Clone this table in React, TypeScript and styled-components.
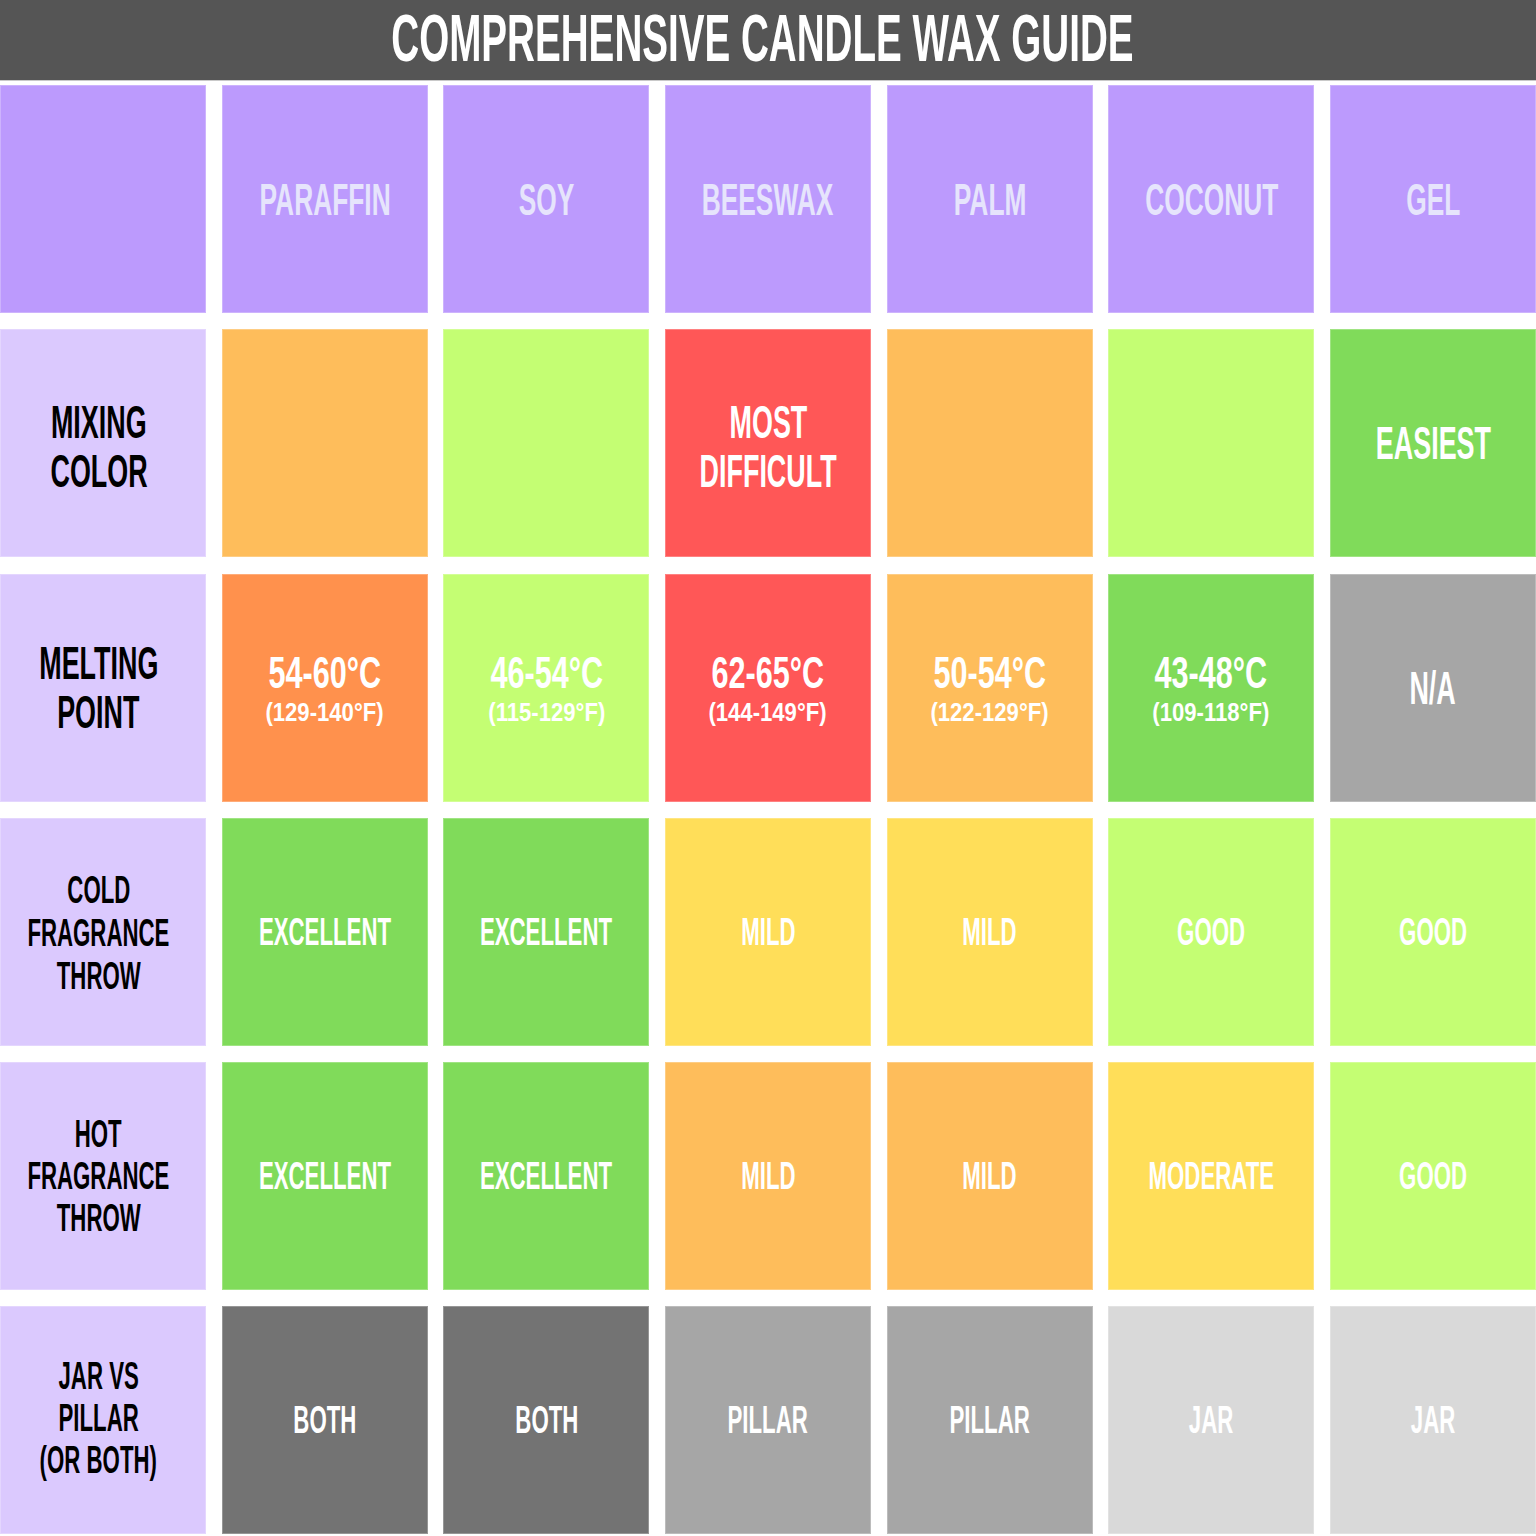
import React from "react";
import styled, { createGlobalStyle } from "styled-components";

const Global = createGlobalStyle`
  html, body { margin: 0; padding: 0; background: #fff; }
  body { font-family: "Liberation Sans Narrow", "Liberation Sans", sans-serif; }
`;

const c = {
  header: "#bc9afd",
  headerText: "#e6e4fc",
  label: "#dbc9fe",
  orange: "#ff914d",
  apricot: "#febd5b",
  lime: "#c4fe73",
  green: "#80db5a",
  red: "#ff5757",
  yellow: "#ffde59",
  gray: "#a6a6a6",
  dark: "#737373",
  light: "#d9d9d9",
};

const Page = styled.div`
  width: 1536px;
  height: 1536px;
  overflow: hidden;
  display: flex;
  flex-direction: column;
  background: #fff;
`;

const TitleBar = styled.div`
  height: 80px;
  background: #555555;
  border-bottom: 1px solid #c9c9c9;
  display: flex;
  align-items: center;
  justify-content: center;
  flex-shrink: 0;
`;

const Title = styled.h1`
  margin: 0;
  color: #fff;
  font-weight: 700;
  font-size: 66px;
  line-height: 1;
  white-space: nowrap;
  transform: translateX(-6px) scaleX(0.585);
  padding-bottom: 4px;
`;

const Grid = styled.div`
  margin-top: 4px;
  flex: 1;
  display: grid;
  grid-template-columns: repeat(7, minmax(0, 1fr));
  grid-template-rows: repeat(6, 228px);
  column-gap: 15.5px;
  row-gap: 16.3px;
`;

const Cell = styled.div<{ $bg: string; $label?: boolean }>`
  min-width: 0;
  background: ${(p) => p.$bg};
  box-shadow: inset 0 0 0 1px rgba(255, 255, 255, 0.25);
  display: flex;
  flex-direction: column;
  align-items: center;
  justify-content: center;
  text-align: center;
  padding-right: ${(p) => (p.$label ? 9 : 0)}px;
`;

const Text = styled.div<{ $size: number; $lh?: number; $color?: string; $sx?: number; $dy?: number }>`
  color: ${(p) => p.$color ?? "#fff"};
  font-weight: 700;
  font-size: ${(p) => p.$size}px;
  line-height: ${(p) => p.$lh ?? p.$size}px;
  white-space: nowrap;
  transform: translateY(${(p) => p.$dy ?? 0}px) scaleX(${(p) => p.$sx ?? 0.585});
`;

const Sub = styled(Text)`
  margin-top: 4px;
`;

const waxes = ["PARAFFIN", "SOY", "BEESWAX", "PALM", "COCONUT", "GEL"];

type Row = {
  label: string[];
  size: number;
  lh: number;
  dy: number;
  cells: { bg: string; text?: string[]; sub?: string }[];
};

const rows: Row[] = [
  {
    label: ["MIXING", "COLOR"],
    size: 46,
    lh: 49,
    dy: 4,
    cells: [
      { bg: c.apricot },
      { bg: c.lime },
      { bg: c.red, text: ["MOST", "DIFFICULT"] },
      { bg: c.apricot },
      { bg: c.lime },
      { bg: c.green, text: ["EASIEST"] },
    ],
  },
  {
    label: ["MELTING", "POINT"],
    size: 46,
    lh: 49,
    dy: 0,
    cells: [
      { bg: c.orange, text: ["54-60°C"], sub: "(129-140°F)" },
      { bg: c.lime, text: ["46-54°C"], sub: "(115-129°F)" },
      { bg: c.red, text: ["62-65°C"], sub: "(144-149°F)" },
      { bg: c.apricot, text: ["50-54°C"], sub: "(122-129°F)" },
      { bg: c.green, text: ["43-48°C"], sub: "(109-118°F)" },
      { bg: c.gray, text: ["N/A"] },
    ],
  },
  {
    label: ["COLD", "FRAGRANCE", "THROW"],
    size: 38,
    lh: 43,
    dy: 2,
    cells: [
      { bg: c.green, text: ["EXCELLENT"] },
      { bg: c.green, text: ["EXCELLENT"] },
      { bg: c.yellow, text: ["MILD"] },
      { bg: c.yellow, text: ["MILD"] },
      { bg: c.lime, text: ["GOOD"] },
      { bg: c.lime, text: ["GOOD"] },
    ],
  },
  {
    label: ["HOT", "FRAGRANCE", "THROW"],
    size: 38,
    lh: 42,
    dy: 0,
    cells: [
      { bg: c.green, text: ["EXCELLENT"] },
      { bg: c.green, text: ["EXCELLENT"] },
      { bg: c.apricot, text: ["MILD"] },
      { bg: c.apricot, text: ["MILD"] },
      { bg: c.yellow, text: ["MODERATE"] },
      { bg: c.lime, text: ["GOOD"] },
    ],
  },
  {
    label: ["JAR VS", "PILLAR", "(OR BOTH)"],
    size: 38,
    lh: 42,
    dy: -2,
    cells: [
      { bg: c.dark, text: ["BOTH"] },
      { bg: c.dark, text: ["BOTH"] },
      { bg: c.gray, text: ["PILLAR"] },
      { bg: c.gray, text: ["PILLAR"] },
      { bg: c.light, text: ["JAR"] },
      { bg: c.light, text: ["JAR"] },
    ],
  },
];

function valueSize(row: number, text: string) {
  if (row === 0) return 46;
  if (row === 1) return text === "N/A" ? 46 : 45;
  return 38;
}

export default function App() {
  return (
    <>
      <Global />
      <Page>
        <TitleBar>
          <Title>COMPREHENSIVE CANDLE WAX GUIDE</Title>
        </TitleBar>
        <Grid>
          <Cell $bg={c.header} />
          {waxes.map((w) => (
            <Cell key={w} $bg={c.header}>
              <Text $size={45} $color={c.headerText}>
                {w}
              </Text>
            </Cell>
          ))}
          {rows.map((r, ri) => (
            <React.Fragment key={r.label.join(" ")}>
              <Cell $bg={c.label} $label>
                {r.label.map((l) => (
                  <Text key={l} $size={r.size} $lh={r.lh} $color="#000" $dy={r.dy}>
                    {l}
                  </Text>
                ))}
              </Cell>
              {r.cells.map((cell, ci) => (
                <Cell key={ci} $bg={cell.bg}>
                  {cell.text?.map((t) => (
                    <Text
                      key={t}
                      $size={valueSize(ri, t)}
                      $lh={ri === 0 ? 49 : valueSize(ri, t)}
                      $sx={cell.sub ? 0.68 : 0.585}
                      $dy={ri === 0 && cell.text!.length > 1 ? 4 : 0}
                    >
                      {t}
                    </Text>
                  ))}
                  {cell.sub && (
                    <Sub $size={26} $sx={0.85}>
                      {cell.sub}
                    </Sub>
                  )}
                </Cell>
              ))}
            </React.Fragment>
          ))}
        </Grid>
      </Page>
    </>
  );
}
